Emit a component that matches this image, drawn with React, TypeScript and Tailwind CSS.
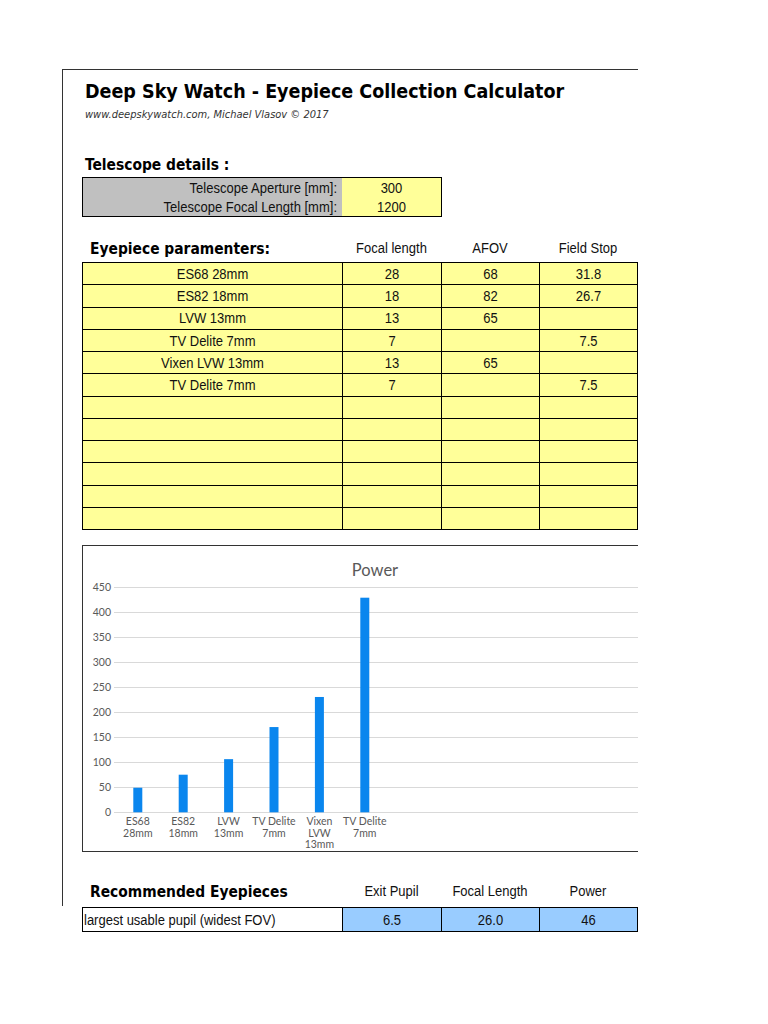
import React from 'react';

const HEAD = "font-['DejaVu_Sans_Condensed','DejaVu_Sans',sans-serif]";
const CELL = "font-['Liberation_Sans',Arial,sans-serif]";

const eyepieces: string[][] = [
    ['ES68 28mm', '28', '68', '31.8'],
    ['ES82 18mm', '18', '82', '26.7'],
    ['LVW 13mm', '13', '65', ''],
    ['TV Delite 7mm', '7', '', '7.5'],
    ['Vixen LVW 13mm', '13', '65', ''],
    ['TV Delite 7mm', '7', '', '7.5'],
    ['', '', '', ''],
    ['', '', '', ''],
    ['', '', '', ''],
    ['', '', '', ''],
    ['', '', '', ''],
    ['', '', '', ''],
];

// chart values read off the bars
const bars = [
    { label: ['ES68', '28mm'], value: 49 },
    { label: ['ES82', '18mm'], value: 75 },
    { label: ['LVW', '13mm'], value: 106 },
    { label: ['TV Delite', '7mm'], value: 170 },
    { label: ['Vixen', 'LVW', '13mm'], value: 230 },
    { label: ['TV Delite', '7mm'], value: 428 },
];

// spreadsheet text is a bit taller than plain Arial at this width
const Txt = ({ children }: { children: React.ReactNode }) => (
    <span className="inline-block scale-y-[1.15]">{children}</span>
);

const PowerChart = () => {
    const zeroY = 266.3;
    const step = 25.07; // px per 50
    const ticks = [0, 50, 100, 150, 200, 250, 300, 350, 400, 450];
    return (
        <svg width={600} height={305} className="block">
            <text x={292} y={29.7} textAnchor="middle" fontFamily="Lato, sans-serif" fontSize={16.5} fill="#595959">
                Power
            </text>
            {ticks.map((t, i) => {
                const y = Math.round(zeroY - i * step) + 0.5;
                return (
                    <g key={t}>
                        <line x1={31} x2={600} y1={y} y2={y} stroke="#d9d9d9" strokeWidth={1} />
                        <text x={28} y={y + 3.6} textAnchor="end" fontFamily="Lato, sans-serif" fontSize={10.5} fill="#595959">
                            {t}
                        </text>
                    </g>
                );
            })}
            {bars.map((b, i) => {
                const cx = 54.8 + i * 45.4;
                const h = (b.value / 50) * step;
                return (
                    <g key={i}>
                        <rect x={cx - 4.5} y={zeroY - h} width={9} height={h} fill="#0a86ee" />
                        {b.label.map((line, j) => (
                            <text key={j} x={cx} y={279 + j * 11.7} textAnchor="middle" fontFamily="Lato, sans-serif" fontSize={10.5} fill="#595959">
                                {line}
                            </text>
                        ))}
                    </g>
                );
            })}
        </svg>
    );
};

const App = () => {
    return (
        <div className="w-[768px] h-[1024px] bg-white pt-[69px] text-black">
            <div className="ml-[62px] w-[576px] overflow-hidden">
                <div className="border-t border-l border-[#333] pl-[19px] pb-[5px]">
                    {/* title */}
                    <div className={`mt-[10px] h-[24px] flex items-center pl-[3px] text-[19.5px] font-bold ${HEAD}`}>
                        Deep Sky Watch - Eyepiece Collection Calculator
                    </div>
                    <div className={`mt-[3px] h-[16px] flex items-center pl-[3px] text-[11px] italic text-[#333] ${HEAD}`}>
                        www.deepskywatch.com, Michael Vlasov © 2017
                    </div>

                    {/* telescope */}
                    <div className={`mt-[33px] h-[20px] flex items-center pl-[3px] text-[15.4px] font-bold ${HEAD}`}>
                        Telescope details :
                    </div>
                    <div className={`mt-[1px] w-[360px] border border-black grid grid-cols-[259px_99px] text-[13px] text-[#111] ${CELL}`}>
                        <div className="bg-[#c0c0c0] h-[19px] flex items-center justify-end pr-[5px]"><Txt>Telescope Aperture [mm]:</Txt></div>
                        <div className="bg-[#ffff99] h-[19px] flex items-center justify-center"><Txt>300</Txt></div>
                        <div className="bg-[#c0c0c0] h-[19px] flex items-center justify-end pr-[5px]"><Txt>Telescope Focal Length [mm]:</Txt></div>
                        <div className="bg-[#ffff99] h-[19px] flex items-center justify-center"><Txt>1200</Txt></div>
                    </div>

                    {/* eyepiece table */}
                    <div className="mt-[21px] h-[20px] flex items-center">
                        <div className={`w-[260px] pl-[8px] pt-[4px] text-[15.4px] font-bold ${HEAD}`}>Eyepiece paramenters:</div>
                        <div className={`w-[99px] text-center text-[13px] text-[#111] ${CELL}`}><Txt>Focal length</Txt></div>
                        <div className={`w-[98px] text-center text-[13px] text-[#111] ${CELL}`}><Txt>AFOV</Txt></div>
                        <div className={`w-[98px] text-center text-[13px] text-[#111] ${CELL}`}><Txt>Field Stop</Txt></div>
                    </div>
                    <div className={`mt-[4px] w-[556px] border-t border-l border-black grid grid-cols-[260px_99px_98px_98px] bg-[#ffff99] text-[13px] text-[#111] ${CELL}`}>
                        {eyepieces.map((row, r) =>
                            row.map((cell, c) => (
                                <div key={`${r}-${c}`} className="h-[22.25px] border-r border-b border-black flex items-center justify-center">
                                    <Txt>{cell}</Txt>
                                </div>
                            ))
                        )}
                    </div>

                    {/* chart */}
                    <div className="mt-[15px] h-[307px] border-t border-b border-l border-[#333] w-[600px] overflow-hidden">
                        <PowerChart />
                    </div>

                    {/* recommended */}
                    <div className="mt-[29px] h-[20px] flex items-center">
                        <div className={`w-[260px] pl-[8px] pt-[4px] text-[15.4px] font-bold ${HEAD}`}>Recommended Eyepieces</div>
                        <div className={`w-[99px] text-center text-[13px] text-[#111] ${CELL}`}><Txt>Exit Pupil</Txt></div>
                        <div className={`w-[98px] text-center text-[13px] text-[#111] ${CELL}`}><Txt>Focal Length</Txt></div>
                        <div className={`w-[98px] text-center text-[13px] text-[#111] ${CELL}`}><Txt>Power</Txt></div>
                    </div>
                </div>
                <div className="pt-[1px] pl-[20px]">
                    <div className={`w-[556px] border-t border-l border-black grid grid-cols-[260px_99px_98px_98px] text-[13px] text-[#111] ${CELL}`}>
                        <div className="h-[24px] border-r border-b border-black bg-white flex items-center pl-[1px]"><Txt>largest usable pupil (widest FOV)</Txt></div>
                        <div className="h-[24px] border-r border-b border-black bg-[#99ccff] flex items-center justify-center"><Txt>6.5</Txt></div>
                        <div className="h-[24px] border-r border-b border-black bg-[#99ccff] flex items-center justify-center"><Txt>26.0</Txt></div>
                        <div className="h-[24px] border-r border-b border-black bg-[#99ccff] flex items-center justify-center"><Txt>46</Txt></div>
                    </div>
                </div>
            </div>
        </div>
    );
};

export default App;
